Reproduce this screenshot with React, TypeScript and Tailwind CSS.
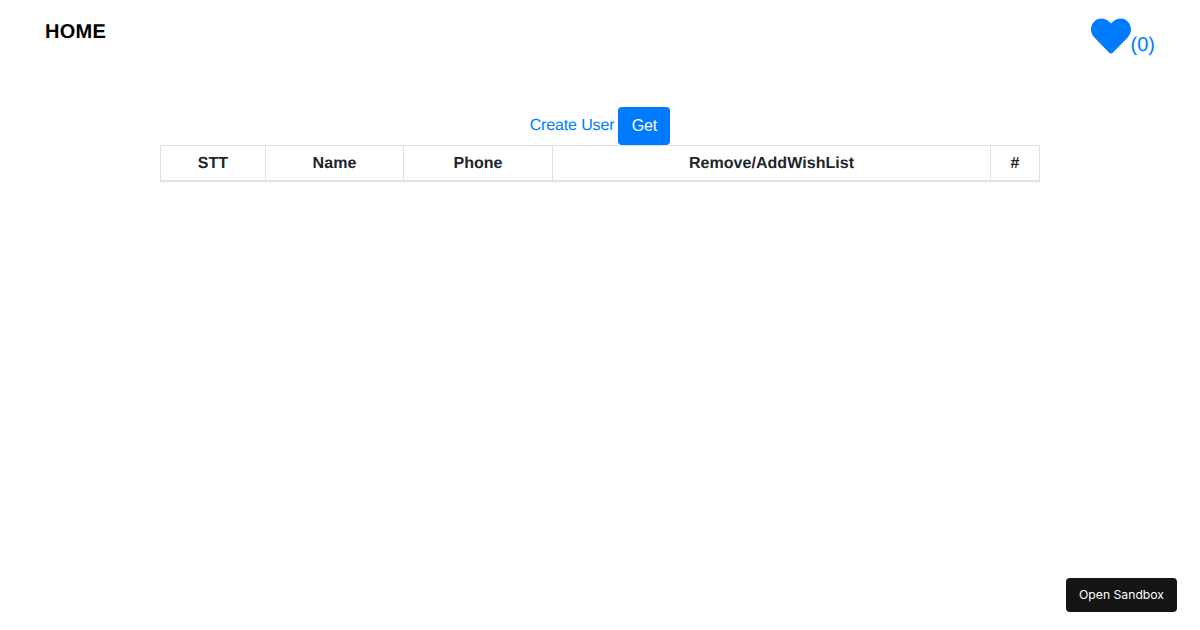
import { FaHeart } from 'react-icons/fa';

const columns = [
  { label: 'STT', width: 'w-[105px]' },
  { label: 'Name', width: 'w-[138px]' },
  { label: 'Phone', width: 'w-[149px]' },
  { label: 'Remove/AddWishList', width: 'w-[438px]' },
  { label: '#', width: 'w-[49px]' },
];

export default function App() {
  return (
    <div className="relative h-[630px] overflow-hidden bg-white font-['Liberation_Sans',Arial,sans-serif] text-base leading-6 text-[#212529] [text-rendering:geometricPrecision]">
      {/* Header */}
      <div className="flex items-start justify-between pl-[45px] pr-[45px] pt-[18px]">
        <h1 className="text-[20px] font-bold leading-[28px] tracking-[0.25px] text-black">HOME</h1>
        <a className="-mt-[2px] flex items-end text-[20px] leading-[30px] text-[#007bff]">
          <FaHeart className="h-[40px] w-[40px]" />
          <span className="-mb-[4px]">(0)</span>
        </a>
      </div>

      <div className="mx-auto mt-[51px] w-[880px]">
        <div className="flex h-[38px] items-center justify-center gap-1">
          <a className="-mt-[1px] tracking-[-0.14px] text-[#007bff]">Create User</a>
          <button className="h-[38px] w-[52px] rounded bg-[#007bff] tracking-[-0.2px] text-white">Get</button>
        </div>
        <table className="w-[879px] table-fixed border-collapse">
          <thead>
            <tr>
              {columns.map(col => (
                <th
                  key={col.label}
                  className={`${col.width} border border-b-2 border-[#dee2e6] pb-[3.8px] pt-[5.8px] text-center font-bold tracking-[0.05px]`}
                >
                  {col.label}
                </th>
              ))}
            </tr>
          </thead>
        </table>
      </div>

      <button className="absolute bottom-[18px] right-[23px] h-[34px] w-[111px] rounded bg-[#151515] font-['Inter',sans-serif] text-[12.2px] text-white">
        Open Sandbox
      </button>
    </div>
  );
}
